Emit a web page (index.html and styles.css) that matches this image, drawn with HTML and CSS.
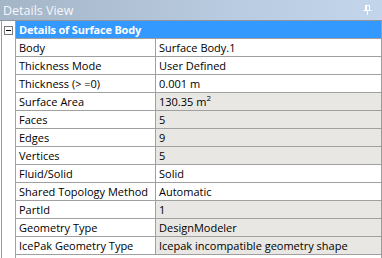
FILE: index.html
```html
<!DOCTYPE html>
<html lang="en">
<head>
<meta charset="UTF-8" />
<title>Details View</title>
<link rel="stylesheet" href="styles.css">
</head>
<body>

<div class="panel">
  <div class="titlebar">
    <span class="title">Details View</span>
    <svg class="pin" width="9" height="10" viewBox="0 0 9 10">
      <path d="M2 0.5h5M2.5 0.5v5M6.5 0.5v5M0.5 5.5h8M4.5 5.5v4.5M3.5 0.5v5" stroke="#fff" stroke-width="1" fill="none"/>
    </svg>
  </div>

  <div class="content">
    <div class="gutter">
      <div class="toggle"><span></span></div>
    </div>
    <div class="grid">
      <div class="group">Details of Surface Body</div>

      <div class="name">Body</div><div class="value">Surface Body.1</div>
      <div class="name">Thickness Mode</div><div class="value">User Defined</div>
      <div class="name">Thickness (&gt; =0)</div><div class="value">0.001 m</div>
      <div class="name">Surface Area</div><div class="value ro">130.35 m<sup>2</sup></div>
      <div class="name">Faces</div><div class="value ro">5</div>
      <div class="name">Edges</div><div class="value ro">9</div>
      <div class="name">Vertices</div><div class="value ro">5</div>
      <div class="name">Fluid/Solid</div><div class="value">Solid</div>
      <div class="name">Shared Topology Method</div><div class="value">Automatic</div>
      <div class="name">PartId</div><div class="value ro">1</div>
      <div class="name">Geometry Type</div><div class="value ro">DesignModeler</div>
      <div class="name">IcePak Geometry Type</div><div class="value ro">Icepak incompatible geometry shape</div>
    </div>
  </div>
</div>

</body>
</html>
```

FILE: styles.css
```css
body {
  margin: 0;
  background: #fff;
  font-family: "Open Sans", "Noto Sans", sans-serif;
  font-size: 11px;
  color: #000;
}
.panel {
  width: 382px;
  height: 258px;
  overflow: hidden;
}
.titlebar {
  height: 20px;
  display: flex;
  align-items: center;
  justify-content: space-between;
  padding: 0 10px 0 3px;
  background: linear-gradient(to right, #a5b5c8, #b9cbe0 60%, #c2d5ea);
  border-bottom: 1px solid #8e959c;
}
.title {
  color: #f4f7fa;
  font-size: 12.5px;
}
.pin {
  display: block;
}
.content {
  display: flex;
  border-left: 1px solid #9c9c9c;
  margin-left: 1px;
  height: 237px;
}
.gutter {
  width: 13px;
  background: #fff;
}
.toggle {
  margin: 5px 0 0 2px;
  width: 7px;
  height: 7px;
  border: 1px solid #7a7a7a;
  background: #fff;
  display: flex;
  align-items: center;
  justify-content: center;
}
.toggle span {
  width: 5px;
  height: 1px;
  background: #000;
}
.grid {
  width: 365px;
  display: grid;
  grid-template-columns: 140px 1fr;
  grid-auto-rows: 18px;
  align-content: start;
  border-left: 1px solid #a0a0a0;
  border-right: 1px solid #9c9c9c;
}
.group {
  grid-column: 1 / 3;
  background: #3399ff;
  color: #fff;
  font-weight: bold;
  letter-spacing: -0.2px;
  padding-left: 3px;
  line-height: 17px;
  border-bottom: 1px solid #a0a0a0;
}
.name, .value {
  line-height: 17px;
  border-bottom: 1px solid #a0a0a0;
  padding-left: 3px;
  white-space: nowrap;
  overflow: hidden;
}
.name {
  border-right: 1px solid #a0a0a0;
}
.value.ro {
  background: #e8e7e3;
}
sup {
  font-size: 8px;
  line-height: 0;
}
```
